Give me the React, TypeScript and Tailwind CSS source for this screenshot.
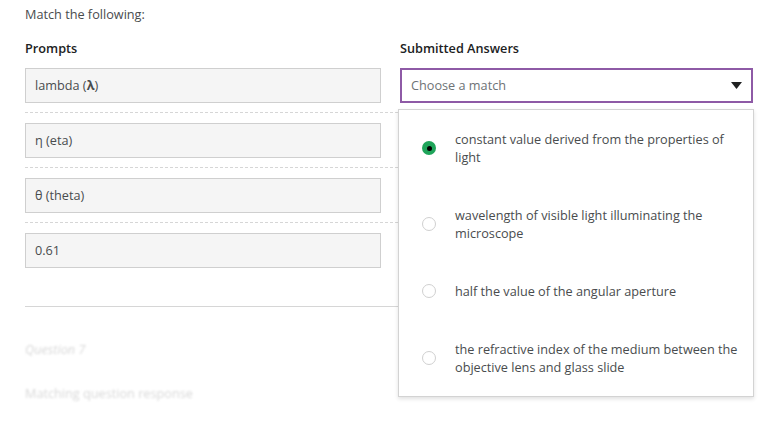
import { useState } from "react"

const prompts = [
    <>lambda (<b className="font-bold">λ</b>)</>,
    <>η (eta)</>,
    <>θ (theta)</>,
    <>0.61</>,
]

const options = [
    "constant value derived from the properties of light",
    "wavelength of visible light illuminating the microscope",
    "half the value of the angular aperture",
    "the refractive index of the medium between the objective lens and glass slide",
]

function Radio({ checked }: { checked: boolean }) {
    if (checked) {
        return (
            <span className="flex h-[14px] w-[14px] shrink-0 items-center justify-center rounded-full bg-[#1fa45a]">
                <span className="h-[5px] w-[5px] rounded-full bg-black" />
            </span>
        )
    }
    return <span className="h-[14px] w-[14px] shrink-0 rounded-full border border-[#d0d0d0] bg-white" />
}

export default function App() {
    const [selected, setSelected] = useState(0)

    return (
        <div className="relative min-h-[440px] w-[774px] bg-white pl-[25px] pr-[21px] text-[12.7px] text-[#494c4e] [font-family:'Open_Sans',sans-serif]">
            <p className="pt-[4px] leading-[20px]">Match the following:</p>

            <div className="mt-[14px] grid grid-cols-[356px_353px] gap-x-[19px] font-semibold leading-[20px] text-[#202122]">
                <span>Prompts</span>
                <span>Submitted Answers</span>
            </div>

            <div className="mt-[10px]">
                {prompts.map((p, i) => (
                    <div
                        key={i}
                        className={`grid grid-cols-[356px_353px] gap-x-[19px] ${
                            i < prompts.length - 1 ? "border-b border-dashed border-[#d6d6d6] pb-[9px] mb-[10px]" : ""
                        }`}
                    >
                        <div className="flex h-[35px] items-center border border-[#cfcfcf] bg-[#f5f5f5] px-[9px]">
                            <span>{p}</span>
                        </div>
                        {i === 0 ? (
                            <div className="flex h-[35px] items-center justify-between border-2 border-[#8e5aa6] bg-white pl-[9px] pr-[9px] text-[#6e7376]">
                                <span>Choose a match</span>
                                <svg width="11" height="7" viewBox="0 0 11 7">
                                    <path d="M0 0 L11 0 L5.5 7 Z" fill="#202122" />
                                </svg>
                            </div>
                        ) : (
                            <div className="h-[35px]" />
                        )}
                    </div>
                ))}
            </div>

            <div className="mt-[38px] border-t border-[#d6d6d6]" />

            {/* obscured follow-up text */}
            <div className="mt-[32px] select-none text-[#d8d8d8] blur-[0.8px]">
                <p className="italic leading-[20px]">Question 7</p>
                <p className="mt-[24px] leading-[20px]">Matching question response</p>
            </div>

            <div className="absolute left-[398px] top-[109px] w-[356px] border border-[#d3d3d3] bg-white shadow-[0_2px_4px_rgba(0,0,0,0.12)]">
                {options.map((o, i) => (
                    <button
                        key={o}
                        onClick={() => setSelected(i)}
                        className="flex w-full items-center gap-[19px] py-[20px] pl-[23px] pr-[10px] text-left leading-[18px]"
                    >
                        <Radio checked={selected === i} />
                        <span>{o}</span>
                    </button>
                ))}
            </div>
        </div>
    )
}
